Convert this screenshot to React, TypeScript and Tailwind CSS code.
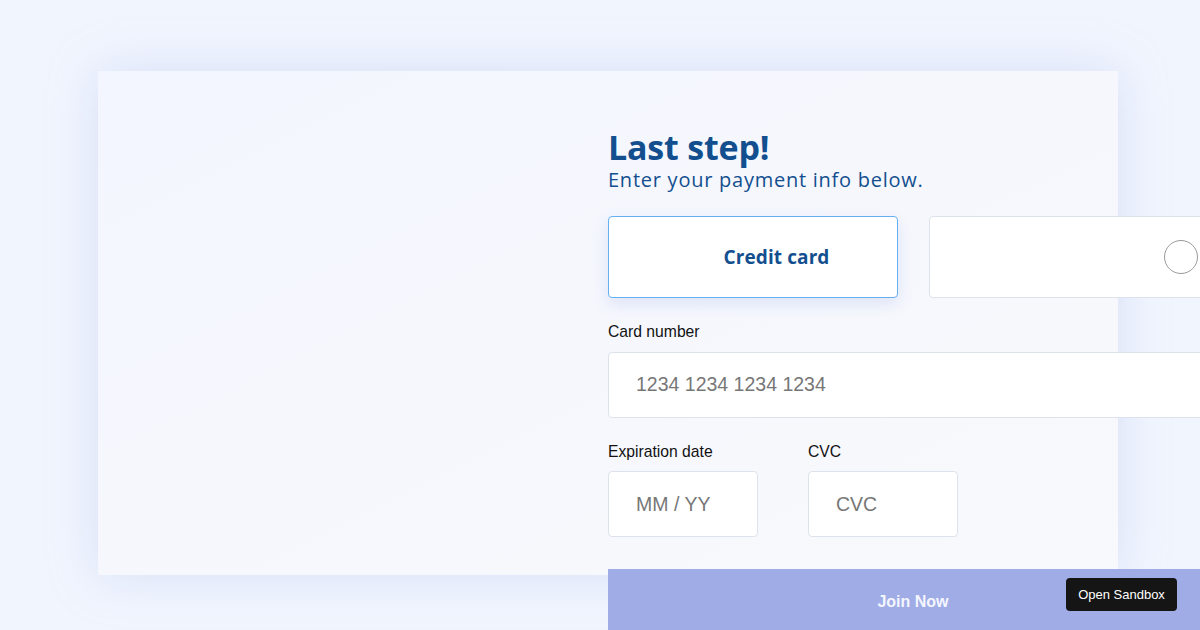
import React from "react";

export default function App() {
  return (
    <div className="relative w-[1200px] h-[630px] overflow-hidden bg-[#f1f5fe]">
      <div className="pt-[71px] pl-[98px]">
        <div className="flex w-[1020px] h-[504px] bg-linear-to-br from-[#f3f6fe] to-[#f8f9fc] shadow-[0_0_45px_rgba(170,185,235,0.35)]">
          <div className="w-[510px] shrink-0" />
          <div className="w-[612px] shrink-0 pt-[59px]">
            <h1 className="h-[34px] font-['Open_Sans',sans-serif] font-bold text-[34px] leading-[34px] text-[#134f8f] tracking-[-0.2px]">
              Last step!
            </h1>
            <p className="mt-[6px] h-[20px] font-['Open_Sans',sans-serif] text-[20px] leading-[20px] tracking-[0.75px] text-[#134f8f]">
              Enter your payment info below.
            </p>
            <div className="mt-[26px] flex gap-[31px]">
              <div className="w-[290px] h-[82px] flex items-center justify-center rounded-[4px] border border-[#66b0f2] bg-white shadow-[0_6px_16px_rgba(110,140,220,0.18)]">
                <span className="w-[47px]" />
                <span className="font-['Open_Sans',sans-serif] font-bold text-[19px] text-[#134f8f] tracking-[0.1px]">
                  Credit card
                </span>
              </div>
              <div className="w-[290px] h-[82px] flex items-center justify-end pr-[20px] rounded-[4px] border border-[#dde3ec] bg-white">
                <span className="w-[34px] h-[34px] rounded-full border border-[#9a9a9a] bg-white" />
              </div>
            </div>
            <label className="block mt-[26px] font-['Liberation_Sans',Arial,sans-serif] text-[15.7px] leading-none text-[#111]">
              Card number
            </label>
            <input
              className="block mt-[12px] w-[610px] h-[66px] rounded-[4px] border border-[#dde3ec] bg-white pl-[27px] font-['Liberation_Sans',Arial,sans-serif] text-[19.5px] text-[#333] placeholder:text-[#777] outline-none"
              placeholder="1234 1234 1234 1234"
            />
            <div className="mt-[26px] flex gap-[50px]">
              <div className="w-[150px]">
                <label className="block font-['Liberation_Sans',Arial,sans-serif] text-[15.7px] leading-none text-[#111]">
                  Expiration date
                </label>
                <input
                  className="block mt-[12px] w-[150px] h-[66px] rounded-[4px] border border-[#dde3ec] bg-white pl-[27px] font-['Liberation_Sans',Arial,sans-serif] text-[19.5px] text-[#333] placeholder:text-[#777] outline-none"
                  placeholder="MM / YY"
                />
              </div>
              <div className="w-[150px]">
                <label className="block font-['Liberation_Sans',Arial,sans-serif] text-[15.7px] leading-none text-[#111]">
                  CVC
                </label>
                <input
                  className="block mt-[12px] w-[150px] h-[66px] rounded-[4px] border border-[#dde3ec] bg-white pl-[27px] font-['Liberation_Sans',Arial,sans-serif] text-[19.5px] text-[#333] placeholder:text-[#777] outline-none"
                  placeholder="CVC"
                />
              </div>
            </div>
            <button className="block mt-[32px] w-[610px] h-[66px] bg-[#a0ace6] text-[#f4f6ff] font-['Liberation_Sans',Arial,sans-serif] font-bold text-[16px]">
              Join Now
            </button>
          </div>
        </div>
      </div>
      <button className="absolute right-[23px] bottom-[19px] w-[111px] h-[33px] rounded-[4px] bg-[#151515] text-white font-['Liberation_Sans',Arial,sans-serif] text-[13px]">
        Open Sandbox
      </button>
    </div>
  );
}
